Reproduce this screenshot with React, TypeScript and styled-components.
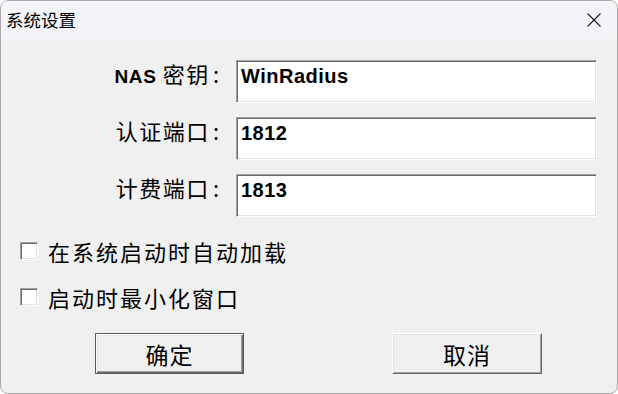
import React from "react";
import styled, { createGlobalStyle, css } from "styled-components";

const Global = createGlobalStyle`
  html, body { margin: 0; padding: 0; background: #ffffff; }
  * { box-sizing: border-box; }
`;

const CJK = `"Noto Sans CJK SC", "Liberation Sans", sans-serif`;

const Window = styled.div`
  width: 618px;
  height: 394px;
  border: 1px solid #a9a9a9;
  border-radius: 8px;
  overflow: hidden;
  background: #f0f0f0;
  display: flex;
  flex-direction: column;
  font-family: ${CJK};
  color: #000;
`;

const TitleBar = styled.div`
  height: 38px;
  flex: none;
  display: flex;
  align-items: center;
  justify-content: space-between;
  padding: 0 15px 0 5px;
  background: #f3f4f8;
  font-size: 17.5px;
`;

const Title = styled.span`
  line-height: 20px;
`;

const CloseButton = styled.div`
  width: 16px;
  height: 16px;
  display: flex;
  align-items: center;
  justify-content: center;
`;

const Body = styled.div`
  padding: 21px 20px 0 19px;
  display: flex;
  flex-direction: column;
`;

const Form = styled.div`
  display: grid;
  grid-template-columns: 198px 361px;
  column-gap: 18px;
  row-gap: 14px;
  grid-auto-rows: 43px;
`;

const Label = styled.div`
  text-align: right;
  font-size: 22px;
  line-height: 26px;
  letter-spacing: 1.5px;
  margin-right: -1px;
  align-self: start;
  white-space: nowrap;
`;

const Colon = styled.span`
  margin-left: 3px;
  letter-spacing: 0;
`;

const Bold = styled.span`
  font-family: "Liberation Sans", sans-serif;
  font-weight: bold;
  font-size: 19px;
  letter-spacing: 0.6px;
`;

const Field = styled.div`
  height: 43px;
  background: #ffffff;
  border-style: solid;
  border-width: 1px;
  border-color: #a0a0a0 #ffffff #ffffff #a0a0a0;
  box-shadow: inset 1px 1px 0 #6a6a6a, inset -1px -1px 0 #e3e3e3;
  padding: 2px 4px 0 4px;
  font-family: "Liberation Sans", sans-serif;
  font-weight: bold;
  font-size: 20px;
  line-height: 26px;
  letter-spacing: 0.5px;
`;

const Checks = styled.div`
  margin-top: 21px;
  display: flex;
  flex-direction: column;
  gap: 20px;
`;

const CheckRow = styled.label`
  display: flex;
  align-items: center;
  gap: 10px;
  height: 26px;
  font-size: 22px;
  line-height: 26px;
  letter-spacing: 2px;
`;

const Box = styled.span`
  width: 18px;
  height: 18px;
  flex: none;
  background: #ffffff;
  border-style: solid;
  border-width: 1px;
  border-color: #a0a0a0 #ffffff #ffffff #a0a0a0;
  box-shadow: inset 1px 1px 0 #6a6a6a, inset -1px -1px 0 #e3e3e3;
`;

const Buttons = styled.div`
  margin-top: 23px;
  padding-left: 75px;
  display: flex;
  gap: 148px;
`;

const Button = styled.div<{ $default?: boolean; $width: number }>`
  width: ${(p) => p.$width}px;
  height: 41px;
  display: flex;
  align-items: center;
  justify-content: center;
  background: #f0f0f0;
  font-size: 23px;
  letter-spacing: 1px;
  ${(p) =>
    p.$default
      ? css`
          border: 1px solid #5a5a5a;
          box-shadow: inset 1px 1px 0 #ffffff, inset -1px -1px 0 #6a6a6a,
            inset -2px -2px 0 #a0a0a0, inset 2px 2px 0 #e3e3e3;
        `
      : css`
          border-style: solid;
          border-width: 1px;
          border-color: #ffffff #6a6a6a #6a6a6a #ffffff;
          box-shadow: inset 1px 1px 0 #e3e3e3, inset -1px -1px 0 #a0a0a0;
        `}
`;

export default function App() {
  return (
    <>
      <Global />
      <Window>
        <TitleBar>
          <Title>系统设置</Title>
          <CloseButton>
            <svg width="14" height="14" viewBox="0 0 14 14">
              <path d="M0.5 0.5 L13.5 13.5 M13.5 0.5 L0.5 13.5" stroke="#1a1a1a" strokeWidth="1.1" fill="none" />
            </svg>
          </CloseButton>
        </TitleBar>
        <Body>
          <Form>
            <Label>
              <Bold>NAS</Bold> 密钥<Colon>:</Colon>
            </Label>
            <Field>WinRadius</Field>
            <Label>
              认证端口<Colon>:</Colon>
            </Label>
            <Field>1812</Field>
            <Label>
              计费端口<Colon>:</Colon>
            </Label>
            <Field>1813</Field>
          </Form>
          <Checks>
            <CheckRow>
              <Box />
              在系统启动时自动加载
            </CheckRow>
            <CheckRow>
              <Box />
              启动时最小化窗口
            </CheckRow>
          </Checks>
          <Buttons>
            <Button $default $width={149}>确定</Button>
            <Button $width={150}>取消</Button>
          </Buttons>
        </Body>
      </Window>
    </>
  );
}
